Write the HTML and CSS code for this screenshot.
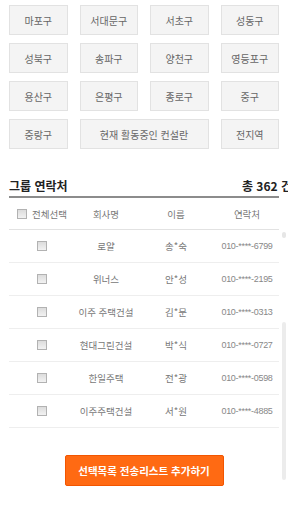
FILE: index.html
```html
<!DOCTYPE html>
<html lang="ko">
<head>
    <meta charset="UTF-8">
    <title>그룹 연락처</title>
    <link rel="stylesheet" href="styles.css">
</head>
<body>
    <div class="area-grid">
        <button class="area">마포구</button>
        <button class="area">서대문구</button>
        <button class="area">서초구</button>
        <button class="area">성동구</button>
        <button class="area">성북구</button>
        <button class="area">송파구</button>
        <button class="area">양천구</button>
        <button class="area">영등포구</button>
        <button class="area">용산구</button>
        <button class="area">은평구</button>
        <button class="area">종로구</button>
        <button class="area">중구</button>
        <button class="area">중랑구</button>
        <button class="area wide">현재 활동중인 컨설란</button>
        <button class="area">전지역</button>
    </div>

    <div class="group-head">
        <h2>그룹 연락처</h2>
        <span class="total">총 362 건</span>
    </div>

    <div class="contact-table">
        <div class="row head">
            <div class="cell"><span class="check"></span>전체선택</div>
            <div class="cell">회사명</div>
            <div class="cell">이름</div>
            <div class="cell">연락처</div>
        </div>
        <div class="rows">
            <div class="row">
                <div class="cell"><span class="check"></span></div>
                <div class="cell">로얄</div>
                <div class="cell">송*숙</div>
                <div class="cell">010-****-6799</div>
            </div>
            <div class="row">
                <div class="cell"><span class="check"></span></div>
                <div class="cell">위너스</div>
                <div class="cell">안*성</div>
                <div class="cell">010-****-2195</div>
            </div>
            <div class="row">
                <div class="cell"><span class="check"></span></div>
                <div class="cell">이주 주택건설</div>
                <div class="cell">김*문</div>
                <div class="cell">010-****-0313</div>
            </div>
            <div class="row">
                <div class="cell"><span class="check"></span></div>
                <div class="cell">현대그린건설</div>
                <div class="cell">박*식</div>
                <div class="cell">010-****-0727</div>
            </div>
            <div class="row">
                <div class="cell"><span class="check"></span></div>
                <div class="cell">한일주택</div>
                <div class="cell">전*광</div>
                <div class="cell">010-****-0598</div>
            </div>
            <div class="row">
                <div class="cell"><span class="check"></span></div>
                <div class="cell">이주주택건설</div>
                <div class="cell">서*원</div>
                <div class="cell">010-****-4885</div>
            </div>
            <div class="table-thumb"></div>
        </div>
    </div>

    <div class="actions">
        <button class="add-btn">선택목록 전송리스트 추가하기</button>
    </div>

    <div class="page-thumb"></div>
</body>
</html>
```

FILE: styles.css
```css
body {
    margin: 0;
    width: 288px;
    height: 512px;
    overflow: hidden;
    font-family: "Noto Sans CJK KR", "Liberation Sans", sans-serif;
    background: #fff;
    color: #666;
}
.area-grid {
    display: grid;
    grid-template-columns: repeat(4, 1fr);
    grid-auto-rows: 30px;
    column-gap: 12px;
    row-gap: 8px;
    padding: 5px 9px 0;
}
.area {
    font-family: inherit;
    font-size: 10px;
    color: #666;
    background: #f4f4f4;
    border: 1px solid #e2e2e2;
    border-radius: 0;
    padding: 0;
    cursor: pointer;
}
.area.wide {
    grid-column: span 2;
}
.group-head {
    display: flex;
    justify-content: space-between;
    align-items: center;
    width: 283px;
    margin: 27px 0 0 9px;
    height: 18px;
    white-space: nowrap;
}
.group-head h2 {
    margin: 0;
    font-size: 12px;
    font-weight: bold;
    color: #222;
}
.total {
    font-size: 12px;
    font-weight: bold;
    color: #222;
}
.contact-table {
    margin: 2px 9px 0;
    border-top: 2px solid #8c8c8c;
}
.rows {
    position: relative;
}
.row {
    display: grid;
    grid-template-columns: 66px 62px 78px 64px;
    height: 32px;
    border-bottom: 1px solid #eeeeee;
    font-size: 9.5px;
    color: #777;
}
.row.head {
    height: 31px;
    border-bottom: 1px solid #e2e2e2;
}
.cell {
    display: flex;
    align-items: center;
    justify-content: center;
    white-space: nowrap;
}
.row .cell:last-child {
    color: #888;
    font-family: "Liberation Sans", sans-serif;
    font-size: 9px;
    letter-spacing: -0.3px;
}
.row.head .cell:last-child {
    font-family: inherit;
    font-size: 9.5px;
    letter-spacing: 0;
    color: #777;
}
.check {
    display: inline-block;
    width: 8px;
    height: 8px;
    border: 1px solid #b2b2b2;
    background: linear-gradient(#dcdcdc, #f2f2f2);
}
.row.head .check {
    margin-right: 5px;
}
.table-thumb {
    position: absolute;
    top: 2px;
    right: -7px;
    width: 4px;
    height: 6px;
    border-radius: 2px;
    background: #e6e6e6;
}
.actions {
    display: flex;
    justify-content: center;
    margin-top: 27px;
}
.add-btn {
    width: 159px;
    height: 31px;
    background: #ff6a13;
    border: 1px solid #f25500;
    border-radius: 2px;
    color: #fff;
    font-family: inherit;
    font-size: 10.5px;
    font-weight: bold;
    cursor: pointer;
}
.page-thumb {
    position: fixed;
    top: 322px;
    right: 2px;
    width: 4px;
    height: 158px;
    border-radius: 2px;
    background: #ececec;
}
```
